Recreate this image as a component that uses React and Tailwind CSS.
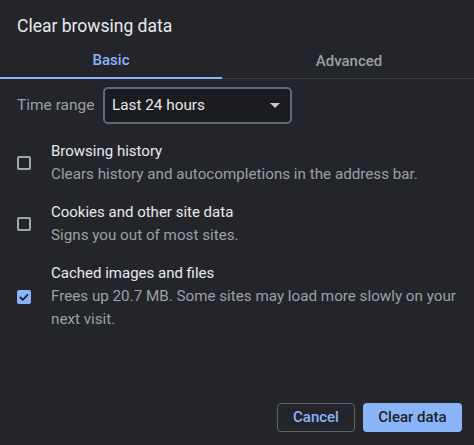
export default function App() {
  const items = [
    { t: "Browsing history", d: "Clears history and autocompletions in the address bar.", c: false },
    { t: "Cookies and other site data", d: "Signs you out of most sites.", c: false },
    { t: "Cached images and files", d: "Frees up 20.7 MB. Some sites may load more slowly on your next visit.", c: true },
  ];
  return (
    <div className="w-[474px] h-[445px] bg-[#24252a] flex flex-col overflow-hidden" style={{ fontFamily: "Roboto, 'Liberation Sans', sans-serif" }}>
      <div className="pl-[17px] pt-[14px] h-[44px] text-[17.5px] leading-[24px] text-[#e8eaed]">Clear browsing data</div>
      <div className="flex h-[35px] border-b border-[#3c4043]">
        <div className="w-[222px] flex items-center justify-center text-[15px] font-medium text-[#8ab4f8] border-b-2 border-[#8ab4f8] -mb-px">Basic</div>
        <div className="flex-1 flex items-center justify-center text-[15px] font-medium text-[#9aa0a6] pl-[2px]">Advanced</div>
      </div>
      <div className="flex items-center pl-[17px] mt-[8px] h-[37px]">
        <span className="text-[15.5px] text-[#9aa0a6] w-[86px]">Time range</span>
        <div className="w-[189px] h-[37px] border-2 border-[#5f6a7a] rounded-[5px] bg-[#1b1c1f] flex items-center justify-between pl-[7px] pr-[10px]">
          <span className="text-[15.3px] text-[#e8eaed]">Last 24 hours</span>
          <svg width="10" height="5" viewBox="0 0 10 5"><path d="M0 0h10L5 5z" fill="#c4c7cc" /></svg>
        </div>
      </div>
      <div className="flex flex-col gap-[15px] mt-[16px]">
        {items.map((it) => (
          <div key={it.t} className="flex items-center">
            <div className="w-[51px] flex pl-[17px]">
              {it.c ? (
                <div className="w-[14px] h-[14px] rounded-[2px] bg-[#8ab4f8] flex items-center justify-center">
                  <svg width="10" height="8" viewBox="0 0 10 8"><path d="M1 4l2.8 2.8L9 1.3" stroke="#202124" strokeWidth="1.8" fill="none" /></svg>
                </div>
              ) : (
                <div className="w-[14px] h-[14px] rounded-[2px] border-2 border-[#a3a7ad]" />
              )}
            </div>
            <div className="flex-1 pr-[14px]">
              <div className="text-[15px] leading-[23px] text-[#e8eaed]">{it.t}</div>
              <div className="text-[15.2px] leading-[23px] text-[#9aa0a6]">{it.d}</div>
            </div>
          </div>
        ))}
      </div>
      <div className="flex-1" />
      <div className="flex justify-end gap-[8px] pr-[12px] pb-[13px]">
        <button className="w-[78px] h-[29px] rounded-[4px] border border-[#5f6368] text-[15px] font-medium text-[#8ab4f8]">Cancel</button>
        <button className="w-[99px] h-[29px] rounded-[4px] bg-[#8ab4f8] text-[15px] font-medium text-[#202124]">Clear data</button>
      </div>
    </div>
  );
}
